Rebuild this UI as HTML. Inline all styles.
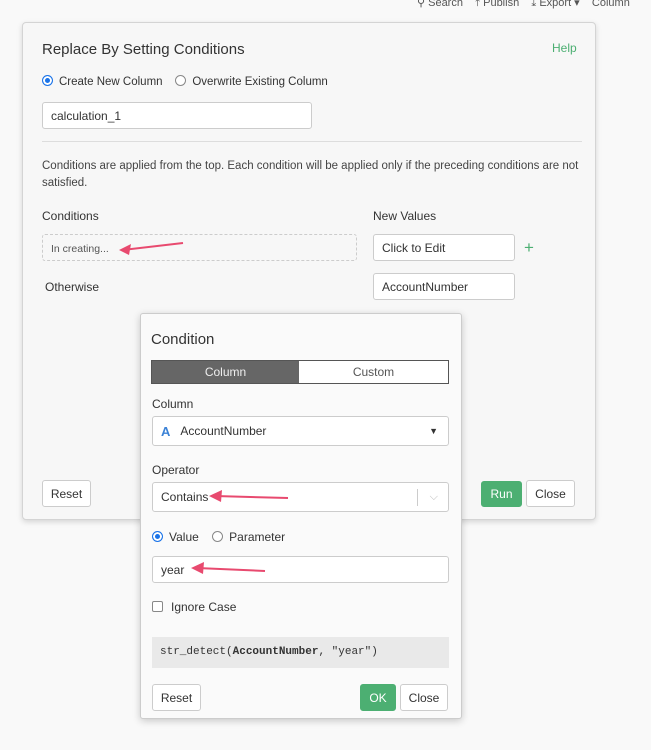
<!DOCTYPE html>
<html><head><style>
*{box-sizing:border-box}
body{margin:0;width:651px;height:750px;background:#f9f9f9;font-family:"Liberation Sans",sans-serif;color:#333;position:relative;overflow:hidden;font-size:12px}
.a{position:absolute}
.dlg{left:22px;top:22px;width:574px;height:498px;background:#f7f7f7;border:1px solid #d4d4d4;border-radius:4px;box-shadow:0 2px 6px rgba(0,0,0,.15)}
.inp{position:absolute;background:#fff;border:1px solid #ccc;border-radius:3px;padding-left:8px;display:flex;align-items:center;font-size:12px;color:#333}
.btn{position:absolute;background:#fff;border:1px solid #ccc;border-radius:3px;display:flex;align-items:center;justify-content:center;font-size:12px;color:#333}
.g{background:#4caf72;border-color:#4caf72;color:#fff}
.radio{display:inline-block;width:11px;height:11px;border:1px solid #888;border-radius:50%;vertical-align:-1px;margin-right:6px;background:#fff}
.radio.on{border-color:#1a73e8;box-shadow:inset 0 0 0 2px #fff;background:#1a73e8}
.pop{left:140px;top:313px;width:322px;height:406px;background:#fafafa;border:1px solid #ccc;border-radius:3px;box-shadow:0 2px 8px rgba(0,0,0,.2)}
</style></head><body>
<div class="a" style="top:-4px;left:417px;color:#555;font-size:11px;white-space:nowrap">⚲ Search &nbsp;&nbsp; ⤒ Publish &nbsp;&nbsp; ⤓ Export ▾ &nbsp;&nbsp; Column</div>
<div class="a dlg"></div>
<div class="a" style="left:42px;top:41px;font-size:15px;color:#333">Replace By Setting Conditions</div>
<div class="a" style="left:552px;top:41px;font-size:12px;color:#4caf72">Help</div>
<div class="a" style="left:42px;top:75px;font-size:11.5px"><span class="radio on"></span>Create New Column &nbsp;&nbsp;&nbsp;<span class="radio"></span>Overwrite Existing Column</div>
<div class="inp" style="left:42px;top:102px;width:270px;height:27px">calculation_1</div>
<div class="a" style="left:42px;top:141px;width:540px;border-top:1px solid #ddd"></div>
<div class="a" style="left:42px;top:158px;width:540px;font-size:11.5px;line-height:17px;color:#444">Conditions are applied from the top. Each condition will be applied only if the preceding conditions are not satisfied.</div>
<div class="a" style="left:42px;top:209px;font-size:12px">Conditions</div>
<div class="a" style="left:373px;top:209px;font-size:12px">New Values</div>
<div class="a" style="left:42px;top:234px;width:315px;height:27px;border:1px dashed #ccc;border-radius:3px;font-size:10.5px;padding:8px 8px;color:#555">In creating...</div>
<svg class="a" style="left:115px;top:238px" width="70" height="18"><path d="M68 5 L8 12" stroke="#e84a6f" stroke-width="2"/><path d="M4 12 L16 6 L14 17 Z" fill="#e84a6f"/></svg>
<div class="inp" style="left:373px;top:234px;width:142px;height:27px">Click to Edit</div>
<div class="a" style="left:524px;top:238px;color:#4caf72;font-size:17px">+</div>
<div class="a" style="left:45px;top:280px;font-size:12px">Otherwise</div>
<div class="inp" style="left:373px;top:273px;width:142px;height:27px">AccountNumber</div>
<div class="btn" style="left:42px;top:480px;width:49px;height:27px">Reset</div>
<div class="btn g" style="left:481px;top:481px;width:41px;height:26px">Run</div>
<div class="btn" style="left:526px;top:480px;width:49px;height:27px">Close</div>

<div class="a pop"></div>
<div class="a" style="left:151px;top:331px;font-size:15px">Condition</div>
<div class="a" style="left:151px;top:360px;width:298px;height:24px;border:1px solid #555;display:flex;font-size:12px">
<div style="width:147px;background:#666;color:#eee;display:flex;align-items:center;justify-content:center">Column</div>
<div style="flex:1;background:#fff;display:flex;align-items:center;justify-content:center;color:#555">Custom</div></div>
<div class="a" style="left:152px;top:397px;font-size:12px">Column</div>
<div class="inp" style="left:152px;top:416px;width:297px;height:30px"><b style="color:#3b82d6;font-size:13px;margin-right:10px">A</b>AccountNumber<span style="position:absolute;right:10px;font-size:9px">▼</span></div>
<div class="a" style="left:152px;top:463px;font-size:12px">Operator</div>
<div class="inp" style="left:152px;top:482px;width:297px;height:30px">Contains<span style="position:absolute;right:30px;top:6px;height:17px;border-left:1px solid #ccc"></span><span style="position:absolute;right:10px;color:#bbb;font-size:11px">⌵</span></div>
<svg class="a" style="left:205px;top:488px" width="85" height="18"><path d="M83 10 L10 8" stroke="#e84a6f" stroke-width="2"/><path d="M4 8 L17 2 L16 14 Z" fill="#e84a6f"/></svg>
<div class="a" style="left:152px;top:530px;font-size:12px"><span class="radio on"></span>Value &nbsp;&nbsp;&nbsp;<span class="radio"></span>Parameter</div>
<div class="inp" style="left:152px;top:556px;width:297px;height:27px">year</div>
<svg class="a" style="left:187px;top:561px" width="80" height="18"><path d="M78 10 L10 7" stroke="#e84a6f" stroke-width="2"/><path d="M4 7 L17 1 L16 13 Z" fill="#e84a6f"/></svg>
<div class="a" style="left:152px;top:600px;font-size:12px"><span style="display:inline-block;width:11px;height:11px;border:1px solid #888;border-radius:2px;background:#fff;vertical-align:-1px;margin-right:8px"></span>Ignore Case</div>
<div class="a" style="left:152px;top:637px;width:297px;height:31px;background:#e9e9e9;font-family:'Liberation Mono',monospace;font-size:11px;padding:9px 8px;color:#333">str_detect(<b>AccountNumber</b>, "year")</div>
<div class="btn" style="left:152px;top:684px;width:49px;height:27px">Reset</div>
<div class="btn g" style="left:360px;top:684px;width:36px;height:27px">OK</div>
<div class="btn" style="left:400px;top:684px;width:48px;height:27px">Close</div>
</body></html>
